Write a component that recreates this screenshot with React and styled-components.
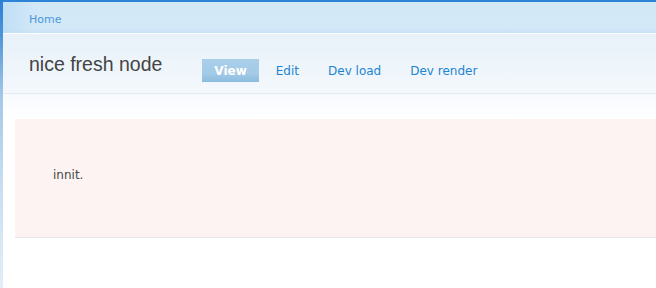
import React from "react";
import styled, { createGlobalStyle } from "styled-components";

const Global = createGlobalStyle`
  html, body { margin: 0; padding: 0; background: #fff; }
  body { width: 656px; height: 288px; overflow: hidden; font-family: "DejaVu Sans", Verdana, sans-serif; }
`;

const Page = styled.div`
  display: flex;
  height: 288px;
`;

const LeftStrip = styled.div`
  width: 3px;
  flex: none;
  background: linear-gradient(180deg, #2a7fd6 0px, #4c94d8 34px, #a3c8e6 95px, #c6ddf0 180px, #e2eef8 288px);
`;

const Main = styled.div`
  flex: 1;
  display: flex;
  flex-direction: column;
  min-width: 0;
`;

const TopLine = styled.div`
  height: 2px;
  background: #2d83d6;
`;

const Crumbs = styled.div`
  height: 31px;
  display: flex;
  align-items: center;
  padding-left: 26px;
  padding-top: 3px;
  box-sizing: border-box;
  background:
    linear-gradient(90deg, rgba(190, 221, 245, 0.9) 0px, rgba(205, 230, 247, 0.4) 30px, rgba(212, 234, 248, 0) 50px),
    linear-gradient(180deg, #d2e8f7 0%, #d4e9f8 85%, #c6e0f4 100%);
  border-bottom: 1px solid #ffffff;
  height: 32px;
`;

const CrumbLink = styled.a`
  font-size: 11px;
  color: #4a98dc;
  text-decoration: none;
  line-height: 1;
`;

const Header = styled.div`
  height: 60px;
  display: flex;
  align-items: flex-start;
  padding-left: 26px;
  background: linear-gradient(180deg, #e8f1f9 0%, #f3f8fc 100%);
  border-bottom: 1px solid #e4eaef;
  box-sizing: border-box;
`;

const Title = styled.h1`
  margin: 0;
  margin-top: 19px;
  font-family: "Liberation Sans", Arial, sans-serif;
  font-weight: normal;
  font-size: 19.5px;
  line-height: 23px;
  color: #444444;
`;

const Tabs = styled.ul`
  list-style: none;
  margin: 0;
  margin-top: 25px;
  margin-left: 40px;
  padding: 0;
  display: flex;
  gap: 5px;
`;

const Tab = styled.li`
  height: 23px;
  display: flex;
  align-items: center;
  padding: 0 12px;
  font-size: 12px;
  font-weight: ${(p) => (p.$active ? "bold" : "normal")};
  color: ${(p) => (p.$active ? "#ffffff" : "#1d84d2")};
  background: ${(p) => (p.$active ? "linear-gradient(180deg, #a9cfe9 0%, #a3cae6 65%, #8bbce0 100%)" : "transparent")};
`;

const Spacer = styled.div`
  height: 25px;
  background: linear-gradient(180deg, #f7fafd 0%, #ffffff 100%);
`;

const Content = styled.div`
  margin-left: 12px;
  height: 119px;
  background: #fdf3f2;
  border-bottom: 1px solid #e8e6e6;
  padding: 49px 0 0 38px;
  box-sizing: border-box;
`;

const Body = styled.p`
  margin: 0;
  font-size: 12px;
  line-height: 15px;
  color: #484848;
`;

export default function App() {
  const tabs = ["View", "Edit", "Dev load", "Dev render"];
  return (
    <>
      <Global />
      <Page>
        <LeftStrip />
        <Main>
          <TopLine />
          <Crumbs>
            <CrumbLink href="#">Home</CrumbLink>
          </Crumbs>
          <Header>
            <Title>nice fresh node</Title>
            <Tabs>
              {tabs.map((t, i) => (
                <Tab key={t} $active={i === 0}>{t}</Tab>
              ))}
            </Tabs>
          </Header>
          <Spacer />
          <Content>
            <Body>innit.</Body>
          </Content>
        </Main>
      </Page>
    </>
  );
}
